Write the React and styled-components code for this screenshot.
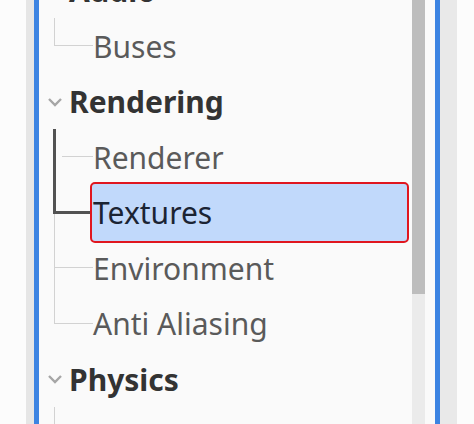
import { useState } from 'react';
import styled, { createGlobalStyle, css } from 'styled-components';

const sections = [
 { title: 'Audio', children: ['Buses'] },
 { title: 'Rendering', children: ['Renderer', 'Textures', 'Environment', 'Anti Aliasing'] },
 { title: 'Physics', children: ['Common'] },
];

export default function App() {
 const [selected, setSelected] = useState('Textures');

 return (
  <>
   <GlobalStyle />
   <Page>
    <Shell>
     <Panel>
      <Tree>
       <List>
        {sections.map((sec) => {
         const selIndex = sec.children.indexOf(selected);
         return (
          <div key={sec.title}>
           <HeaderRow>
            <svg width="16" height="10" viewBox="0 0 16 10">
             <path d="M2 2 L8 8 L14 2" fill="none" stroke="#a6a6a6" strokeWidth="2.4" />
            </svg>
            {sec.title}
           </HeaderRow>
           {sec.children.map((child, i) => {
            const last = i === sec.children.length - 1;
            const isSel = i === selIndex;
            const onPath = selIndex >= 0 && i < selIndex;
            return (
             <ChildRow key={child} onClick={() => setSelected(child)}>
              <Connector>
               {onPath && <VLine $dark $top="0" $bottom="0" />}
               {isSel && <VLine $dark $top="0" $bottom="50%" />}
               {!onPath && !isSel && <VLine $top="0" $bottom={last ? '50%' : '0'} />}
               {isSel && !last && <VLine $top="50%" $bottom="0" />}
               <HLine $dark={isSel} $gap={onPath} />
              </Connector>
              <ChildLabel $selected={isSel}>{child}</ChildLabel>
             </ChildRow>
            );
           })}
          </div>
         );
        })}
       </List>
      </Tree>
      <Scrollbar>
       <Thumb />
      </Scrollbar>
     </Panel>
    </Shell>
   </Page>
  </>
 );
}

const GlobalStyle = createGlobalStyle`
 html, body {
  margin: 0;
  padding: 0;
  height: 100%;
  overflow: hidden;
  background: #fcfcfc;
 }
 body {
  font-family: "Noto Sans", "Open Sans", sans-serif;
 }
`;

const Page = styled.div`
 display: flex;
 width: 474px;
 height: 424px;
 padding-left: 26px;
 box-sizing: border-box;
`;

const Shell = styled.div`
 display: flex;
 width: 431px;
 box-sizing: border-box;
 border-left: 8px solid #e6e6e6;
 border-right: 17px solid #e9e9e9;
`;

const Panel = styled.div`
 flex: 1;
 display: flex;
 background: #fafafa;
 border-left: 5px solid #3d84e2;
 border-right: 5px solid #3d84e2;
 padding-right: 10px;
 overflow: hidden;
`;

const Tree = styled.div`
 flex: 1;
 overflow: hidden;
`;

const List = styled.div`
 margin-top: -37.25px;
`;

const HeaderRow = styled.div`
 display: flex;
 align-items: center;
 gap: 6px;
 height: 55.5px;
 padding-left: 8px;
 font-size: 30px;
 font-weight: 700;
 color: #333333;
`;

const ChildRow = styled.div`
 display: flex;
 height: 55.5px;
 font-size: 30px;
 cursor: pointer;
`;

const Connector = styled.div`
 position: relative;
 flex: none;
 width: 51px;
`;

const VLine = styled.span`
 position: absolute;
 top: ${(p) => p.$top};
 bottom: ${(p) => p.$bottom};
 left: ${(p) => (p.$dark ? '14px' : '15px')};
 width: ${(p) => (p.$dark ? '3px' : '1px')};
 background: ${(p) => (p.$dark ? '#525252' : '#d2d2d2')};
`;

const HLine = styled.span`
 position: absolute;
 top: calc(50% - 1px);
 left: ${(p) => (p.$gap ? '23px' : '15px')};
 right: -3px;
 height: 1px;
 background: #d2d2d2;
 ${(p) =>
  p.$dark &&
  css`
   top: calc(50% - 2px);
   left: 14px;
   right: 0;
   height: 3px;
   background: #525252;
  `}
`;

const ChildLabel = styled.div`
 flex: 1;
 display: flex;
 align-items: center;
 margin: -3px 3px -3px 0;
 padding-left: 1px;
 border: 2px solid transparent;
 border-radius: 5px;
 color: #5a5a5a;
 ${(p) =>
  p.$selected &&
  css`
   background: #c1d9fb;
   border-color: #e0161f;
   color: #1b2433;
  `}
`;

const Scrollbar = styled.div`
 flex: none;
 width: 13px;
 background: #ebebeb;
`;

const Thumb = styled.div`
 height: 294px;
 background: #bdbdbd;
`;
